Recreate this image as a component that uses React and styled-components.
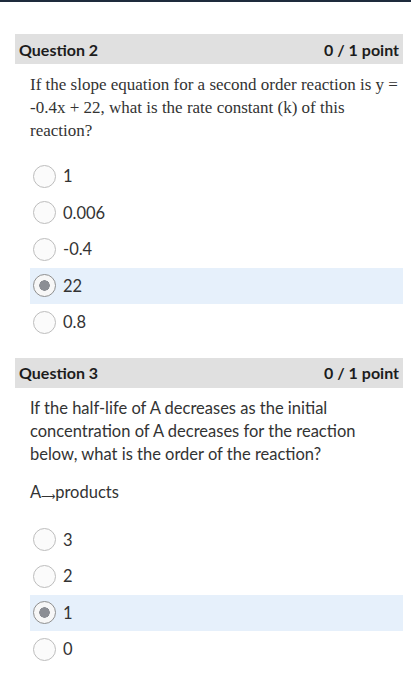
import React from 'react'
import styled, { createGlobalStyle } from 'styled-components'

const questions = [
    {
        title: 'Question 2',
        score: '0 / 1 point',
        serif: true,
        text: 'If the slope equation for a second order reaction is y = -0.4x + 22, what is the rate constant (k) of this reaction?',
        options: ['1', '0.006', '-0.4', '22', '0.8'],
        selected: 3,
    },
    {
        title: 'Question 3',
        score: '0 / 1 point',
        text: 'If the half-life of A decreases as the initial concentration of A decreases for the reaction below, what is the order of the reaction?',
        extra: true,
        options: ['3', '2', '1', '0'],
        selected: 2,
    },
]

function App() {
    return (
        <>
            <GlobalStyle />
            <TopLine />
            <Page>
                {questions.map((q) => (
                    <Question key={q.title}>
                        <Header>
                            <span>{q.title}</span>
                            <span>{q.score}</span>
                        </Header>
                        <Prompt serif={q.serif}>{q.text}</Prompt>
                        {q.extra && (
                            <Reaction>
                                A<Arrow>⟶</Arrow>products
                            </Reaction>
                        )}
                        <Options>
                            {q.options.map((opt, i) => (
                                <Option key={opt} active={i === q.selected}>
                                    <Radio active={i === q.selected} />
                                    {opt}
                                </Option>
                            ))}
                        </Options>
                    </Question>
                ))}
            </Page>
        </>
    )
}

export default App

const GlobalStyle = createGlobalStyle`
    body {
        margin: 0;
        background: #fff;
        font-family: 'Lato', 'Liberation Sans', sans-serif;
        color: #2d2d2d;
    }
`

const TopLine = styled.div`
    height: 2px;
    background: #1e2b3c;
`

const Page = styled.main`
    padding: 32px 8px 0 15px;
    display: flex;
    flex-direction: column;
    gap: 17px;
`

const Question = styled.section`
    display: flex;
    flex-direction: column;
`

const Header = styled.div`
    display: flex;
    justify-content: space-between;
    align-items: center;
    height: 30px;
    padding: 0 4px;
    background: #e0e0e0;
    font-weight: 700;
    font-size: 16px;
    color: #1c1c1c;
`

const Prompt = styled.p`
    margin: 9px 2px 0 15px;
    font-family: ${(p) =>
        p.serif ? "'Liberation Serif', 'Times New Roman', serif" : "'Lato', 'Liberation Sans', sans-serif"};
    font-size: ${(p) => (p.serif ? '17px' : '16.5px')};
    line-height: 23px;
    color: #333;
`

const Reaction = styled.div`
    margin: 15px 0 0 15px;
    font-size: 16.5px;
    line-height: 23px;
    color: #333;
`

const Arrow = styled.span`
    font-size: 10px;
    position: relative;
    top: 2px;
`

const Options = styled.div`
    display: flex;
    flex-direction: column;
    margin: 16px 0 0 15px;
`

const Option = styled.label`
    display: flex;
    align-items: center;
    gap: 7px;
    height: 36.5px;
    padding-left: 3px;
    background: ${(p) => (p.active ? '#e6f0fb' : 'transparent')};
    font-size: 16.5px;
    color: #333;
`

const Radio = styled.span`
    box-sizing: border-box;
    width: 23px;
    height: 23px;
    border-radius: 50%;
    border: 1px solid ${(p) => (p.active ? '#8f8f8f' : '#bdbdbd')};
    background: ${(p) =>
        p.active
            ? 'radial-gradient(circle, #8b8e94 0 5px, #f7f7f7 5.5px)'
            : '#fbfbfb'};
`
